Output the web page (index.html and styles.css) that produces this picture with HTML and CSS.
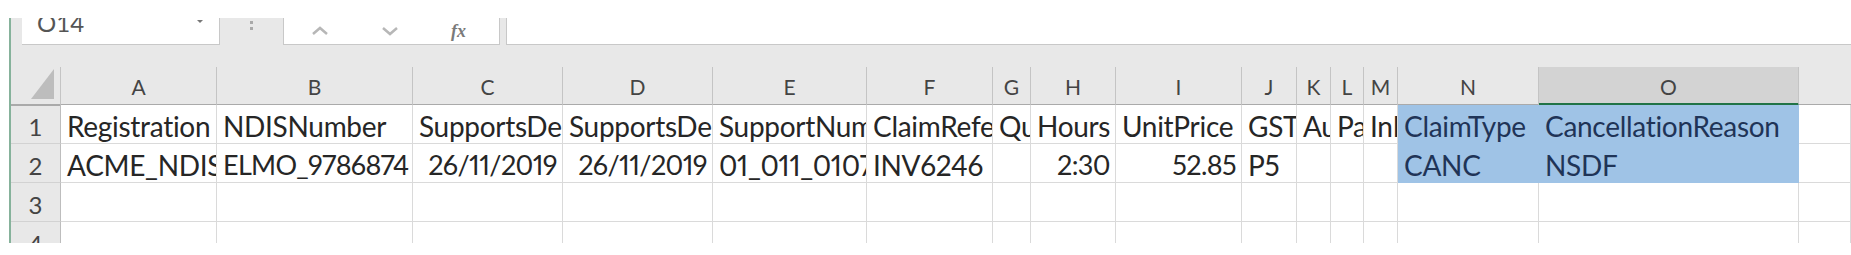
FILE: index.html
```html
<!DOCTYPE html>
<html lang="en">
<head>
    <meta charset="UTF-8">
    <title>NDIS Claims - Sheet1</title>
    <link rel="stylesheet" href="styles.css">
</head>
<body>
    <div class="window">
        <div class="formula-bar">
            <div class="name-box">
                <span class="name-text">O14</span>
                <span class="drop"></span>
            </div>
            <div class="grip"><span class="dots"></span></div>
            <div class="fx-box">
                <svg class="chev up" width="18" height="10" viewBox="0 0 18 10"><polyline points="2,8 9,2 16,8" /></svg>
                <svg class="chev down" width="18" height="10" viewBox="0 0 18 10"><polyline points="2,2 9,8 16,2" /></svg>
                <span class="fx">fx</span>
            </div>
            <div class="formula-input"></div>
        </div>
        <div class="bar-gap"></div>

        <div class="row head-row">
            <div class="corner">
                <svg width="23" height="30" viewBox="0 0 23 30"><polygon points="0,30 23,30 23,0" /></svg>
            </div>
            <div class="col-hdr">A</div>
            <div class="col-hdr">B</div>
            <div class="col-hdr">C</div>
            <div class="col-hdr">D</div>
            <div class="col-hdr">E</div>
            <div class="col-hdr">F</div>
            <div class="col-hdr">G</div>
            <div class="col-hdr">H</div>
            <div class="col-hdr">I</div>
            <div class="col-hdr">J</div>
            <div class="col-hdr">K</div>
            <div class="col-hdr">L</div>
            <div class="col-hdr">M</div>
            <div class="col-hdr">N</div>
            <div class="col-hdr active">O</div>
            <div class="col-hdr blank"></div>
        </div>

        <div class="row">
            <div class="row-hdr">1</div>
            <div class="cell">Registration</div>
            <div class="cell">NDISNumber</div>
            <div class="cell">SupportsDeliveredFrom</div>
            <div class="cell">SupportsDeliveredTo</div>
            <div class="cell">SupportNumber</div>
            <div class="cell">ClaimReference</div>
            <div class="cell">Quantity</div>
            <div class="cell">Hours</div>
            <div class="cell">UnitPrice</div>
            <div class="cell">GSTCode</div>
            <div class="cell">AuthorisedBy</div>
            <div class="cell">ParticipantApproved</div>
            <div class="cell">InKindFundingProgram</div>
            <div class="cell sel">ClaimType</div>
            <div class="cell sel">CancellationReason</div>
            <div class="cell"></div>
        </div>

        <div class="row">
            <div class="row-hdr">2</div>
            <div class="cell">ACME_NDIS_4051</div>
            <div class="cell code">ELMO_9786874</div>
            <div class="cell num">26/11/2019</div>
            <div class="cell num">26/11/2019</div>
            <div class="cell">01_011_0107_1_1</div>
            <div class="cell">INV6246</div>
            <div class="cell"></div>
            <div class="cell num">2:30</div>
            <div class="cell num">52.85</div>
            <div class="cell">P5</div>
            <div class="cell"></div>
            <div class="cell"></div>
            <div class="cell"></div>
            <div class="cell sel">CANC</div>
            <div class="cell sel">NSDF</div>
            <div class="cell"></div>
        </div>

        <div class="row">
            <div class="row-hdr">3</div>
            <div class="cell"></div><div class="cell"></div><div class="cell"></div><div class="cell"></div>
            <div class="cell"></div><div class="cell"></div><div class="cell"></div><div class="cell"></div>
            <div class="cell"></div><div class="cell"></div><div class="cell"></div><div class="cell"></div>
            <div class="cell"></div><div class="cell"></div><div class="cell"></div><div class="cell"></div>
        </div>

        <div class="row last">
            <div class="row-hdr">4</div>
            <div class="cell"></div><div class="cell"></div><div class="cell"></div><div class="cell"></div>
            <div class="cell"></div><div class="cell"></div><div class="cell"></div><div class="cell"></div>
            <div class="cell"></div><div class="cell"></div><div class="cell"></div><div class="cell"></div>
            <div class="cell"></div><div class="cell"></div><div class="cell"></div><div class="cell"></div>
        </div>
    </div>
</body>
</html>
```

FILE: styles.css
```css
body {
    margin: 0;
    background: #ffffff;
    font-family: Lato, "Noto Sans", sans-serif;
    height: 255px;
    overflow: hidden;
}
.window {
    margin-top: 18px;
    margin-left: 9px;
    border-left: 2px solid #86b29b;
    height: 225px;
    overflow: hidden;
    background: #e8e8e8;
}

/* Formula bar */
.formula-bar {
    display: flex;
    height: 27px;
    padding-left: 11px;
    background: #e8e8e8;
}
.name-box {
    position: relative;
    width: 198px;
    box-sizing: border-box;
    padding-left: 15px;
    background: #ffffff;
    border-right: 1px solid #c8c8c8;
    border-bottom: 1px solid #c8c8c8;
    overflow: hidden;
}
.name-text {
    display: block;
    margin-top: -7px;
    font-size: 24px;
    line-height: 24px;
    color: #555;
}
.drop {
    position: absolute;
    right: 16px;
    top: 2px;
    border-left: 3px solid transparent;
    border-right: 3px solid transparent;
    border-top: 3px solid #777;
}
.grip {
    width: 63px;
    display: flex;
    justify-content: center;
}
.dots {
    margin-top: 3px;
    height: 9px;
    border-left: 3px dotted #a9a9a9;
}
.fx-box {
    width: 217px;
    box-sizing: border-box;
    display: flex;
    align-items: center;
    background: #ffffff;
    border-left: 1px solid #c8c8c8;
    border-right: 1px solid #c8c8c8;
    border-bottom: 1px solid #c8c8c8;
}
.chev {
    fill: none;
    stroke: #b7b7b7;
    stroke-width: 2.5;
}
.chev.up {
    margin-left: 27px;
}
.chev.down {
    margin-left: 52px;
}
.fx {
    margin-left: 52px;
    font-family: "Liberation Serif", serif;
    font-style: italic;
    font-weight: bold;
    font-size: 18px;
    color: #7a7a7a;
}
.formula-input {
    flex: 1;
    margin-left: 6px;
    background: #ffffff;
    border-left: 1px solid #c8c8c8;
    border-bottom: 1px solid #c8c8c8;
}
.bar-gap {
    height: 22px;
}

/* Grid */
.row {
    display: grid;
    grid-template-columns: 50px 156px 196px 150px 150px 154px 126px 38px 85px 126px 55px 34px 33px 34px 141px 260px 1fr;
    height: 39px;
}
.head-row {
    height: 38px;
}
.row.last {
    height: 21px;
}
.corner {
    display: flex;
    justify-content: flex-end;
    align-items: flex-end;
    padding: 0 6px 5px 0;
    border-right: 1px solid #c4c4c4;
    border-bottom: 2px solid #aaaaaa;
}
.corner polygon {
    fill: #bdbdbd;
}
.col-hdr {
    box-sizing: border-box;
    padding-top: 3px;
    text-align: center;
    font-size: 21px;
    line-height: 33px;
    color: #444;
    border-right: 1px solid #c4c4c4;
    border-bottom: 2px solid #aaaaaa;
}
.col-hdr.active {
    background: #d3d3d3;
    border-bottom: 3px solid #217346;
}
.col-hdr.blank {
    border-right: none;
}
.row-hdr {
    box-sizing: border-box;
    padding-top: 6px;
    text-align: center;
    font-size: 24px;
    line-height: 32px;
    color: #444;
    border-right: 1px solid #bdbdbd;
    border-bottom: 1px solid #d2d2d2;
}
.cell {
    box-sizing: border-box;
    padding: 4px 6px 0 6px;
    font-size: 28px;
    line-height: 34px;
    letter-spacing: -0.3px;
    font-variant-numeric: proportional-nums;
    color: #262626;
    background: #ffffff;
    white-space: nowrap;
    overflow: hidden;
    border-right: 1px solid #dadada;
    border-bottom: 1px solid #dadada;
}
.cell.code {
    font-size: 27px;
    letter-spacing: -0.7px;
}
.cell.num {
    text-align: right;
    padding-right: 5px;
    font-size: 27px;
    letter-spacing: -0.6px;
}
.cell.sel {
    background: #9fc3e6;
    color: #1f3457;
    border-color: #9fc3e6;
}
```
